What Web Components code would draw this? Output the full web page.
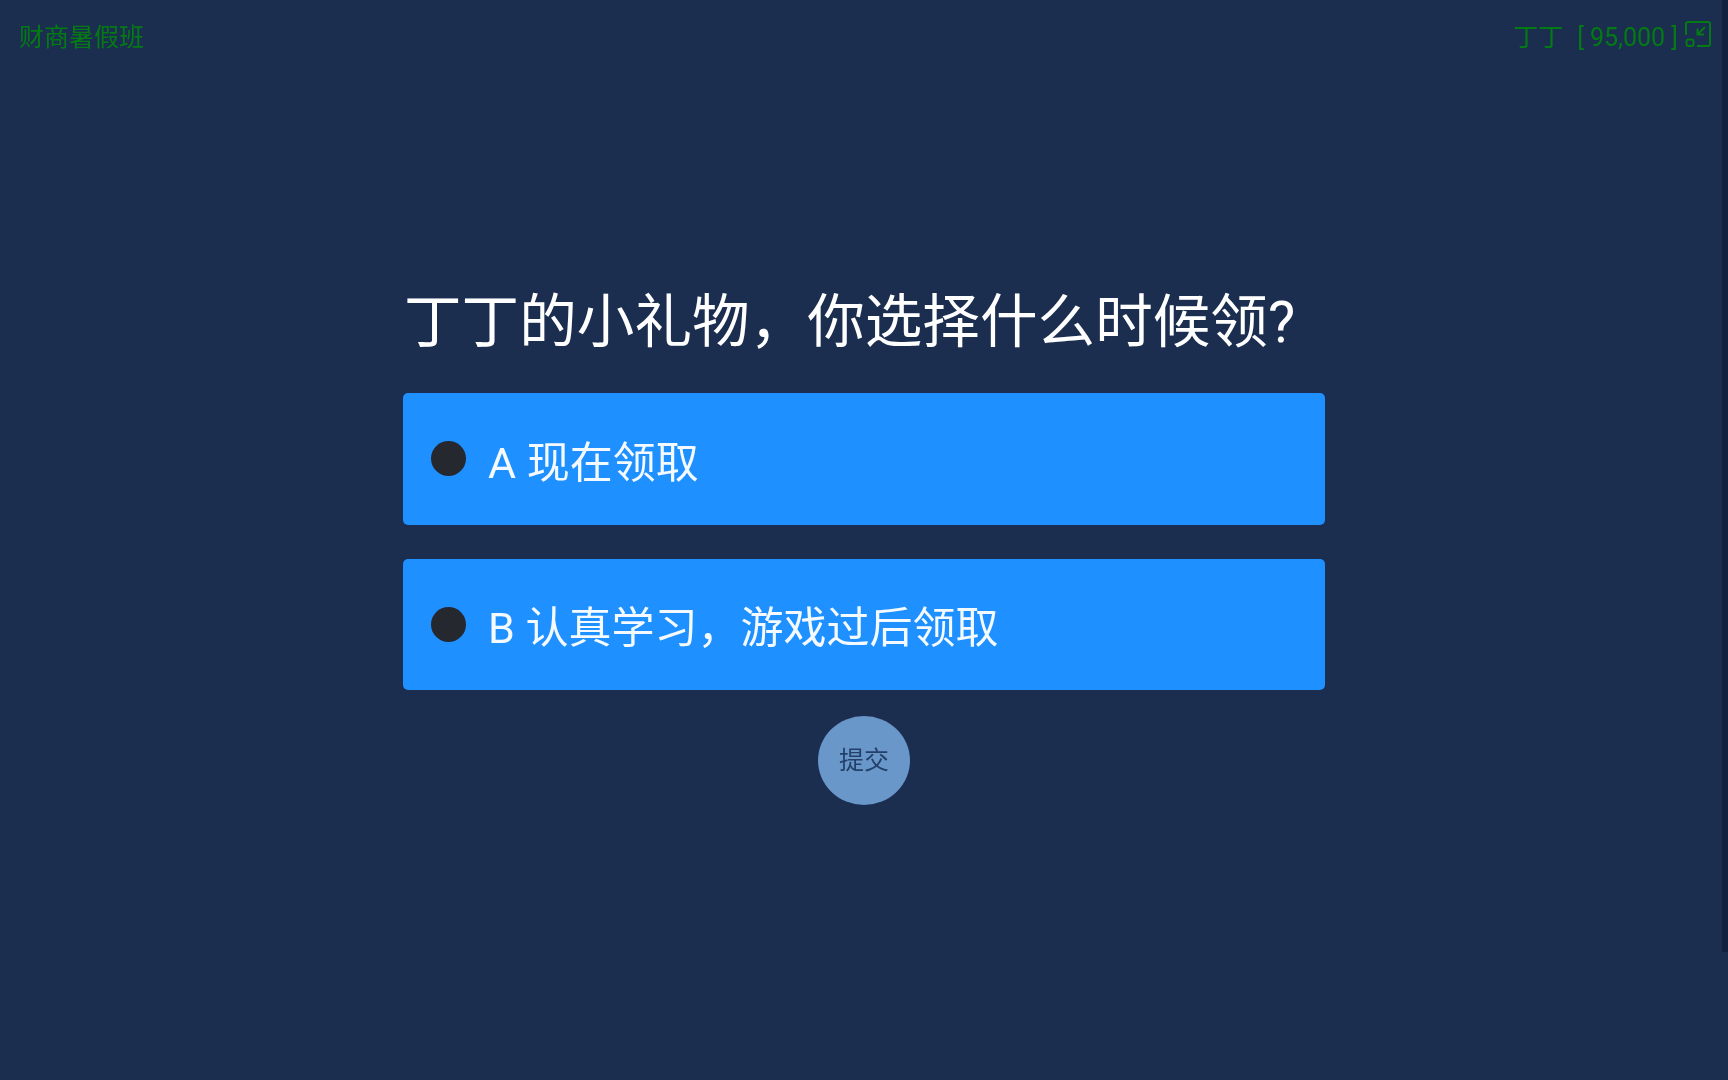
<!DOCTYPE html>
<html lang="zh">
<head>
<meta charset="utf-8">
<title>财商暑假班</title>
<style>
html,body{margin:0;height:100%;background:#1b2e50;overflow:hidden;}
</style>
</head>
<body>
<quiz-page>
  <top-bar slot="top" course="财商暑假班" user="丁丁" score="[ 95,000 ]"></top-bar>
  <quiz-question title-text="丁丁的小礼物，你选择什么时候领?">
    <quiz-option>A 现在领取</quiz-option>
    <quiz-option>B 认真学习，游戏过后领取</quiz-option>
  </quiz-question>
  <submit-button>提交</submit-button>
</quiz-page>
<script>
class QuizPage extends HTMLElement{
    constructor(){
        super()
        this.attachShadow({mode:'open'});
        this.shadowRoot.innerHTML=`
        <style>
        :host{
            display:flex;
            width:100%;
            height:1080px;
            font-family:Roboto,"Noto Sans CJK SC","Liberation Sans",sans-serif;
            background:#1b2e50;
        }
        .main{
            flex:1;
            display:flex;
            flex-direction:column;
            align-items:center;
            filter:blur(.45px);
        }
        .rail{
            width:6px;
            height:952px;
            background:#12213d;
        }
        </style>
        <div class="main">
            <slot name="top"></slot>
            <slot></slot>
        </div>
        <div class="rail"></div>
        `;
    }
}
class TopBar extends HTMLElement{
    constructor(){
        super()
        this.attachShadow({mode:'open'});
        this.shadowRoot.innerHTML=`
        <style>
        :host{
            display:flex;
            align-self:stretch;
            justify-content:space-between;
            align-items:center;
            height:70px;
            padding:0 10px 0 19px;
            color:#047a14;
            font-size:25px;
        }
        .right{display:flex;align-items:center;gap:6px;}
        .user{margin-right:8px;}
        .score{padding-top:4px;}
        svg{width:28px;height:28px;display:block;margin-top:-2px;}
        </style>
        <span>${this.getAttribute('course')}</span>
        <div class="right">
            <span class="user">${this.getAttribute('user')}</span>
            <span class="score">${this.getAttribute('score')}</span>
            <svg viewBox="0 0 28 28" fill="none" stroke="#047a14" stroke-width="2">
                <path d="M2 15V4a2 2 0 0 1 2-2h20a2 2 0 0 1 2 2v20a2 2 0 0 1-2 2H13"/>
                <rect x="2.5" y="19.5" width="7" height="6.5" rx="2"/>
                <path d="M21 7l-7 7M13.5 8.500V14.500H20"/>
            </svg>
        </div>
        `;
    }
}
class QuizQuestion extends HTMLElement{
    constructor(){
        super()
        this.attachShadow({mode:'open'});
        this.shadowRoot.innerHTML=`
        <style>
        :host{
            display:flex;
            flex-direction:column;
            width:922px;
            margin-top:214.5px;
            margin-right:-6px;
        }
        h1{
            margin:0 0 32.5px;
            height:76px;
            line-height:76px;
            padding-left:1px;
            font-size:57.6px;
            font-weight:400;
            color:#fff;
            white-space:nowrap;
        }
        .list{display:flex;flex-direction:column;gap:34px;}
        </style>
        <h1>${this.getAttribute('title-text')}</h1>
        <div class="list"><slot></slot></div>
        `;
    }
}
class QuizOption extends HTMLElement{
    constructor(){
        super()
        this.attachShadow({mode:'open'});
        this.shadowRoot.innerHTML=`
        <style>
        :host{
            display:flex;
            align-items:center;
            gap:22px;
            height:131.5px;
            padding:0 28px;
            background:#1e90ff;
            border-radius:5px;
            color:#f4faff;
            font-size:43px;
        }
        .dot{width:35px;height:35px;border-radius:50%;background:#262830;flex:none;}
        </style>
        <div class="dot"></div>
        <span><slot></slot></span>
        `;
    }
}
class SubmitButton extends HTMLElement{
    constructor(){
        super()
        this.attachShadow({mode:'open'});
        this.shadowRoot.innerHTML=`
        <style>
        :host{
            display:flex;
            align-items:center;
            justify-content:center;
            box-sizing:border-box;
            width:92px;
            height:89px;
            padding-bottom:5px;
            margin-top:26px;
            margin-right:-6px;
            border-radius:50%;
            background:#6a97c9;
            color:#23406b;
            font-size:25px;
        }
        </style>
        <slot></slot>
        `;
    }
}
customElements.define('quiz-page',QuizPage);
customElements.define('top-bar',TopBar);
customElements.define('quiz-question',QuizQuestion);
customElements.define('quiz-option',QuizOption);
customElements.define('submit-button',SubmitButton);
</script>
</body>
</html>
